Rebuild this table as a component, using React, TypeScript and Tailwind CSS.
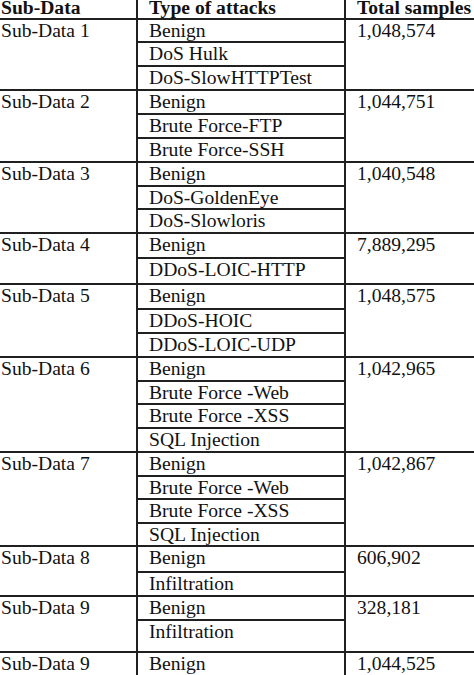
import React from 'react'

type Group = {
  name: string
  attacks: string[]
  heights: number[]
  total: string
}

// row pitches measured off the scan, border included
const H: Record<number, string> = {
  23: 'h-[23px]',
  24: 'h-[24px]',
  25: 'h-[25px]',
  26: 'h-[26px]',
  32: 'h-[32px]',
}

const groups: Group[] = [
  { name: 'Sub-Data 1', attacks: ['Benign', 'DoS Hulk', 'DoS-SlowHTTPTest'], heights: [23, 24, 24], total: '1,048,574' },
  { name: 'Sub-Data 2', attacks: ['Benign', 'Brute Force-FTP', 'Brute Force-SSH'], heights: [24, 24, 24], total: '1,044,751' },
  { name: 'Sub-Data 3', attacks: ['Benign', 'DoS-GoldenEye', 'DoS-Slowloris'], heights: [24, 23, 24], total: '1,040,548' },
  { name: 'Sub-Data 4', attacks: ['Benign', 'DDoS-LOIC-HTTP'], heights: [25, 26], total: '7,889,295' },
  { name: 'Sub-Data 5', attacks: ['Benign', 'DDoS-HOIC', 'DDoS-LOIC-UDP'], heights: [25, 24, 24], total: '1,048,575' },
  { name: 'Sub-Data 6', attacks: ['Benign', 'Brute Force -Web', 'Brute Force -XSS', 'SQL Injection'], heights: [24, 23, 24, 24], total: '1,042,965' },
  { name: 'Sub-Data 7', attacks: ['Benign', 'Brute Force -Web', 'Brute Force -XSS', 'SQL Injection'], heights: [24, 23, 24, 23], total: '1,042,867' },
  { name: 'Sub-Data 8', attacks: ['Benign', 'Infiltration'], heights: [26, 24], total: '606,902' },
  { name: 'Sub-Data 9', attacks: ['Benign', 'Infiltration'], heights: [24, 32], total: '328,181' },
  { name: 'Sub-Data 9', attacks: ['Benign'], heights: [24], total: '1,044,525' },
]

const line = 'border-[#202020]'

export default function App() {
  return (
    <div className="min-h-[675px] w-[474px] overflow-hidden bg-white font-['Liberation_Serif','Times_New_Roman',serif] text-[19.6px] text-[#111]">
      {/* header, the scan crops its top edge */}
      <div className={`flex h-[20px] border-b-2 ${line} font-bold leading-[16px]`}>
        <div className={`w-[138px] shrink-0 border-r-2 ${line} pl-px whitespace-nowrap`}>Sub-Data</div>
        <div className={`w-[208px] shrink-0 border-r-2 ${line} pl-[11px] whitespace-nowrap`}>Type of attacks</div>
        <div className="flex-1 pl-[11px] whitespace-nowrap">Total samples</div>
      </div>

      {groups.map((g, i) => (
        <div key={i} className="flex">
          <div className={`w-[138px] shrink-0 border-r-2 border-b-2 ${line} pl-px leading-[22px] whitespace-nowrap`}>
            {g.name}
          </div>
          <div className={`w-[208px] shrink-0 border-r-2 ${line} flex flex-col`}>
            {g.attacks.map((a, j) => (
              <div key={j} className={`${H[g.heights[j]]} border-b-2 ${line} pl-[11px] leading-[22px] whitespace-nowrap`}>
                {a}
              </div>
            ))}
          </div>
          <div className={`flex-1 border-b-2 ${line} pl-[11px] leading-[22px] whitespace-nowrap`}>
            {g.total}
          </div>
        </div>
      ))}
    </div>
  )
}
